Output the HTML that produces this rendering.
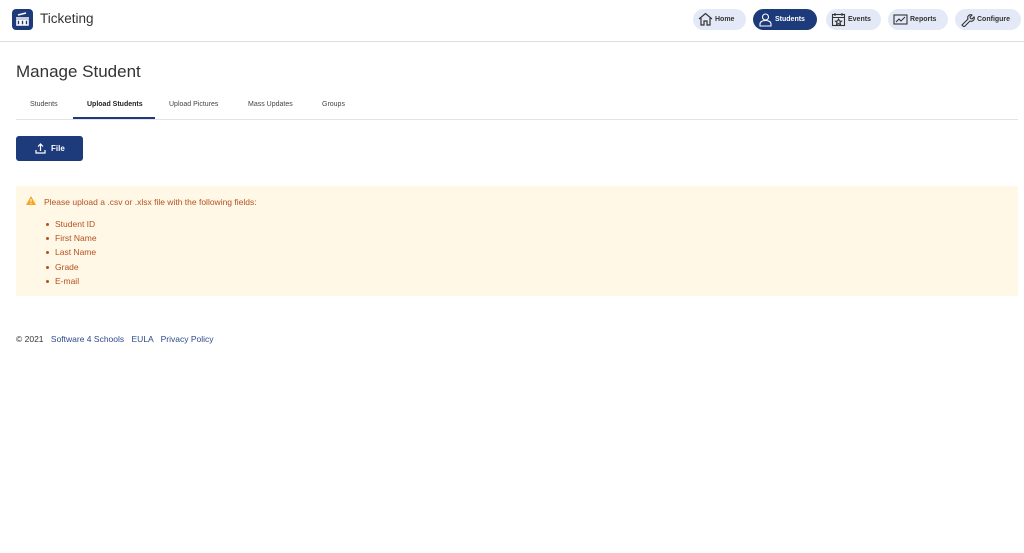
<!DOCTYPE html>
<html><head><meta charset="utf-8"><style>
*{margin:0;padding:0;box-sizing:border-box}
body{width:1024px;height:553px;background:#fff;font-family:"Liberation Sans",sans-serif;color:#333;position:relative;overflow:hidden}
.hdr{position:absolute;left:0;top:0;width:1024px;height:42px;border-bottom:1px solid #ddd}
.logo{position:absolute;left:12px;top:9px;width:21px;height:21px;background:#1d3a7a;border-radius:4px}
.title{position:absolute;left:40px;top:11px;font-size:13.5px;color:#333}
.pill{position:absolute;top:9px;height:21px;border-radius:11px;background:#e4e9f7;font-size:7px;font-weight:bold;color:#333;line-height:21px;padding-left:22px}
.pill svg{position:absolute;left:5px;top:3px}
.pill.act{background:#1d3a7a;color:#fff}
h1{position:absolute;left:16px;top:62px;font-size:17px;font-weight:normal;color:#333}
.tabs{position:absolute;left:16px;top:96px;width:1002px;height:24px;border-bottom:1px solid #e3e3e3}
.tab{position:absolute;top:5px;font-size:7px;color:#444}
.tab.act{font-weight:bold;color:#222}
.ul{position:absolute;left:57px;top:21px;width:82px;height:2px;background:#1d3a7a}
.btn{position:absolute;left:16px;top:136px;width:67px;height:25px;background:#1d3a7a;border-radius:3px;color:#fff;font-size:8px;font-weight:bold;line-height:25px;padding-left:35px}
.btn svg{position:absolute;left:19px;top:7px}
.warn{position:absolute;left:16px;top:186px;width:1002px;height:110px;background:#fff8e6;color:#b5501f;font-size:8.5px}
.warn .t{position:absolute;left:28px;top:11px}
.warn svg{position:absolute;left:10px;top:10px}
.warn ul{position:absolute;left:39px;top:33px;list-style:none}
.warn li{height:14.2px;position:relative}
.warn li:before{content:"";position:absolute;left:-9px;top:4px;width:3px;height:3px;border-radius:50%;background:#b5501f}
.foot{position:absolute;left:16px;top:334px;font-size:8.5px;color:#333}
.foot a{color:#2c4a8c;text-decoration:none;margin-left:5px}
</style></head><body>
<div class="hdr">
<div class="logo"><svg width="21" height="21" viewBox="0 0 21 21"><path d="M4 9h13M6 6l8-2M5 11h3v5H5zM9 11h3v5H9zM13 11h3v5h-3z" stroke="#fff" stroke-width="1.6" fill="none"/></svg></div>
<div class="title">Ticketing</div>
<div class="pill" style="left:693px;width:53px"><svg width="15" height="15" viewBox="0 0 15 15" fill="none" stroke="#333" stroke-width="1.2"><path d="M1 7L7.5 1.5 14 7M3 6v7h3v-4h3v4h3V6"/></svg>Home</div>
<div class="pill act" style="left:753px;width:64px"><svg width="15" height="15" viewBox="0 0 15 15" fill="none" stroke="#fff" stroke-width="1.1"><circle cx="7.5" cy="5" r="3"/><path d="M2 14v-2c0-2 2-3.5 5.5-3.5S13 10 13 12v2z"/></svg>Students</div>
<div class="pill" style="left:826px;width:55px"><svg width="15" height="15" viewBox="0 0 15 15" fill="none" stroke="#333" stroke-width="1.1"><rect x="1.5" y="2.5" width="12" height="11"/><path d="M1.5 5.5h12M4 1v3M11 1v3M7.5 7l1 2 2 .2-1.5 1.4.5 2-2-1-2 1 .5-2L4.5 9.2l2-.2z"/></svg>Events</div>
<div class="pill" style="left:888px;width:60px"><svg width="15" height="15" viewBox="0 0 15 15" fill="none" stroke="#333" stroke-width="1.1"><rect x="1" y="3" width="13" height="9"/><path d="M3 10l3-3 2 2 4-4"/></svg>Reports</div>
<div class="pill" style="left:955px;width:66px"><svg width="15" height="15" viewBox="0 0 15 15" fill="none" stroke="#333" stroke-width="1.1"><path d="M2 13l6-6a3 3 0 0 1 4-4l-2 2 .5 1.5L12 7l2-2a3 3 0 0 1-4 4l-6 6z"/></svg>Configure</div>
</div>
<h1>Manage Student</h1>
<div class="tabs">
<div class="tab" style="left:14px">Students</div>
<div class="tab act" style="left:71px">Upload Students</div>
<div class="tab" style="left:153px">Upload Pictures</div>
<div class="tab" style="left:232px">Mass Updates</div>
<div class="tab" style="left:306px">Groups</div>
<div class="ul"></div>
</div>
<div class="btn"><svg width="11" height="11" viewBox="0 0 11 11" fill="none" stroke="#fff" stroke-width="1.2"><path d="M5.5 8V1M3 3.5L5.5 1 8 3.5M1 7v3h9V7"/></svg>File</div>
<div class="warn">
<svg width="10" height="9" viewBox="0 0 10 9"><path d="M5 0L10 9H0z" fill="#f5a623"/><path d="M5 3v3M5 7v1" stroke="#fff" stroke-width="1"/></svg>
<div class="t">Please upload a .csv or .xlsx file with the following fields:</div>
<ul><li>Student ID</li><li>First Name</li><li>Last Name</li><li>Grade</li><li>E-mail</li></ul>
</div>
<div class="foot">© 2021 <a>Software 4 Schools</a> <a>EULA</a> <a>Privacy Policy</a></div>
</body></html>
